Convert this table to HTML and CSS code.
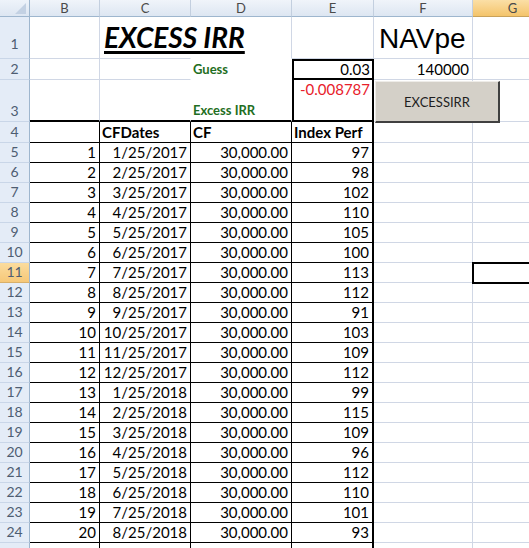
FILE: index.html
```html
<!DOCTYPE html>
<html>
<head>
<meta charset="utf-8">
<link rel="stylesheet" href="styles.css">
</head>
<body>
<div class="sheet">
  <div class="corner"></div><div class="ch">B</div><div class="ch">C</div><div class="ch">D</div><div class="ch">E</div><div class="ch">F</div><div class="ch ch-sel">G</div>

  <div class="rh rh-tall">1</div><div class="c"></div><div class="c c1"><span class="title">EXCESS IRR</span></div><div class="c d1"></div><div class="c"></div><div class="c"><span class="nav">NAVpe</span></div><div class="c"></div>

  <div class="rh">2</div><div class="c"></div><div class="c nogr"></div><div class="c fill"><span class="green">Guess</span></div><div class="c r box2">0.03</div><div class="c r">140000</div><div class="c"></div>

  <div class="rh">3</div><div class="c thick"></div><div class="c thick nogr"></div><div class="c fill thick"><span class="green">Excess IRR</span></div><div class="c r box3"><span class="red">-0.008787</span></div><div class="c"></div><div class="c"></div>

  <div class="rh">4</div><div class="c t"></div><div class="c t b">CFDates</div><div class="c t b">CF</div><div class="c t te b">Index Perf</div><div class="c"></div><div class="c"></div>

  <div class="rh">5</div><div class="c r t">1</div><div class="c r t">1/25/2017</div><div class="c r t">30,000.00</div><div class="c r t te">97</div><div class="c"></div><div class="c"></div>
  <div class="rh">6</div><div class="c r t">2</div><div class="c r t">2/25/2017</div><div class="c r t">30,000.00</div><div class="c r t te">98</div><div class="c"></div><div class="c"></div>
  <div class="rh">7</div><div class="c r t">3</div><div class="c r t">3/25/2017</div><div class="c r t">30,000.00</div><div class="c r t te">102</div><div class="c"></div><div class="c"></div>
  <div class="rh">8</div><div class="c r t">4</div><div class="c r t">4/25/2017</div><div class="c r t">30,000.00</div><div class="c r t te">110</div><div class="c"></div><div class="c"></div>
  <div class="rh">9</div><div class="c r t">5</div><div class="c r t">5/25/2017</div><div class="c r t">30,000.00</div><div class="c r t te">105</div><div class="c"></div><div class="c"></div>
  <div class="rh">10</div><div class="c r t">6</div><div class="c r t">6/25/2017</div><div class="c r t">30,000.00</div><div class="c r t te">100</div><div class="c"></div><div class="c"></div>
  <div class="rh rh-sel">11</div><div class="c r t">7</div><div class="c r t">7/25/2017</div><div class="c r t">30,000.00</div><div class="c r t te">113</div><div class="c"></div><div class="c active"></div>
  <div class="rh">12</div><div class="c r t">8</div><div class="c r t">8/25/2017</div><div class="c r t">30,000.00</div><div class="c r t te">112</div><div class="c"></div><div class="c"></div>
  <div class="rh">13</div><div class="c r t">9</div><div class="c r t">9/25/2017</div><div class="c r t">30,000.00</div><div class="c r t te">91</div><div class="c"></div><div class="c"></div>
  <div class="rh">14</div><div class="c r t">10</div><div class="c r t">10/25/2017</div><div class="c r t">30,000.00</div><div class="c r t te">103</div><div class="c"></div><div class="c"></div>
  <div class="rh">15</div><div class="c r t">11</div><div class="c r t">11/25/2017</div><div class="c r t">30,000.00</div><div class="c r t te">109</div><div class="c"></div><div class="c"></div>
  <div class="rh">16</div><div class="c r t">12</div><div class="c r t">12/25/2017</div><div class="c r t">30,000.00</div><div class="c r t te">112</div><div class="c"></div><div class="c"></div>
  <div class="rh">17</div><div class="c r t">13</div><div class="c r t">1/25/2018</div><div class="c r t">30,000.00</div><div class="c r t te">99</div><div class="c"></div><div class="c"></div>
  <div class="rh">18</div><div class="c r t">14</div><div class="c r t">2/25/2018</div><div class="c r t">30,000.00</div><div class="c r t te">115</div><div class="c"></div><div class="c"></div>
  <div class="rh">19</div><div class="c r t">15</div><div class="c r t">3/25/2018</div><div class="c r t">30,000.00</div><div class="c r t te">109</div><div class="c"></div><div class="c"></div>
  <div class="rh">20</div><div class="c r t">16</div><div class="c r t">4/25/2018</div><div class="c r t">30,000.00</div><div class="c r t te">96</div><div class="c"></div><div class="c"></div>
  <div class="rh">21</div><div class="c r t">17</div><div class="c r t">5/25/2018</div><div class="c r t">30,000.00</div><div class="c r t te">112</div><div class="c"></div><div class="c"></div>
  <div class="rh">22</div><div class="c r t">18</div><div class="c r t">6/25/2018</div><div class="c r t">30,000.00</div><div class="c r t te">110</div><div class="c"></div><div class="c"></div>
  <div class="rh">23</div><div class="c r t">19</div><div class="c r t">7/25/2018</div><div class="c r t">30,000.00</div><div class="c r t te">101</div><div class="c"></div><div class="c"></div>
  <div class="rh">24</div><div class="c r t">20</div><div class="c r t">8/25/2018</div><div class="c r t">30,000.00</div><div class="c r t te">93</div><div class="c"></div><div class="c"></div>
  <div class="rh rh-last"></div><div class="c t"></div><div class="c t last-row">9/25/2018</div><div class="c t"></div><div class="c t te"></div><div class="c"></div><div class="c"></div>
</div>
<button class="macro-btn" type="button">EXCESSIRR</button>
</body>
</html>
```

FILE: styles.css
```css
* { box-sizing: border-box; }
html, body { margin: 0; padding: 0; }
body {
  width: 529px;
  height: 548px;
  overflow: hidden;
  background: #fff;
  position: relative;
  font-family: Lato, "Liberation Sans", sans-serif;
}
.sheet {
  display: grid;
  grid-template-columns: 30px 70px 91px 101px 82px 99px 80px;
  grid-template-rows: 17px 42px 21px 42px 21px repeat(20, 20px) 6px;
  width: 553px;
}
.corner {
  background: linear-gradient(#eef3fa, #dde6f2);
  border-right: 1px solid #9eb6ce;
  border-bottom: 1px solid #9eb6ce;
  display: flex;
  justify-content: flex-end;
  align-items: flex-end;
  padding: 0 3px 2px 0;
}
.corner::after {
  content: "";
  width: 0;
  height: 0;
  border-left: 11px solid transparent;
  border-bottom: 11px solid #c3d1e3;
}
.ch {
  background: linear-gradient(#f0f4fa, #dde6f2);
  border-right: 1px solid #c3cfdf;
  border-bottom: 1px solid #9eb6ce;
  display: flex;
  justify-content: center;
  align-items: center;
  font-size: 13px;
  color: #4a4a4a;
  line-height: 16px;
}
.ch-sel {
  background: linear-gradient(#fbdfa6, #f4c46b);
  border-bottom-color: #c9a25a;
  border-right-color: #e0b870;
}
.rh {
  background: #e4ecf7;
  border-right: 1px solid #9eb6ce;
  border-bottom: 1px solid #c9d6e8;
  display: flex;
  justify-content: center;
  align-items: flex-end;
  font-size: 14px;
  line-height: 18px;
  padding-bottom: 1px;
  color: #4e5d72;
}
.rh-tall { padding-bottom: 5px; }
.rh-last { border-bottom: none; }
.rh-sel {
  background: linear-gradient(#fbdc9e, #f6c878);
  border-bottom-color: #d8b06a;
}
.c {
  border-right: 1px solid #d0d7e5;
  border-bottom: 1px solid #d0d7e5;
  display: flex;
  align-items: flex-end;
  padding: 0 3px 1px 3px;
  font-size: 15px;
  line-height: 18px;
  color: #000;
  white-space: nowrap;
  min-width: 0;
}
.r { justify-content: flex-end; }
.b { font-weight: 700; padding-left: 2px; }
.t {
  border-right-color: #000;
  border-bottom-color: #000;
}
.te { border-right: 2px solid #000; }
.thick { border-bottom: 2px solid #000; }
.nogr { border-right-color: transparent; }
.c1 {
  border-right-color: transparent;
  overflow: visible;
  padding: 0 0 5px 4px;
}
.d1 { border-bottom-color: transparent; }
.fill {
  background: #fff;
  border-right-color: transparent;
  padding-left: 2px;
}
.fill:not(.thick) { border-bottom-color: transparent; }
.last-row {
  justify-content: flex-end;
  align-items: flex-start;
  overflow: hidden;
  padding-top: 3px;
  line-height: 18px;
}
.title {
  font-size: 28px;
  font-weight: 700;
  font-style: italic;
  line-height: 32px;
  text-decoration: underline;
  text-decoration-thickness: 3px;
  text-underline-offset: 3px;
}
.nav {
  font-family: "Liberation Sans", Arial, sans-serif;
  font-size: 28px;
  line-height: 32px;
  padding: 0 0 2px 2px;
}
.green {
  color: #1f6e22;
  font-weight: 700;
  font-size: 13px;
  line-height: 18px;
}
.box2 {
  border: 2px solid #000;
  padding-right: 2px;
  padding-bottom: 0;
}
.box3 {
  border-left: 2px solid #000;
  border-right: 2px solid #000;
  border-bottom: 2px solid #000;
  align-items: flex-start;
  padding-right: 2px;
}
.red { color: #e8202a; }
.active { position: relative; }
.active::after {
  content: "";
  position: absolute;
  left: -1px;
  top: -1px;
  right: -4px;
  bottom: -2px;
  border: 2px solid #000;
}
.macro-btn {
  position: absolute;
  left: 375px;
  top: 81px;
  width: 125px;
  height: 42px;
  margin: 0;
  padding: 0;
  appearance: none;
  background: #d4d0c8;
  border-top: 1px solid #eeece8;
  border-left: 1px solid #eeece8;
  border-right: 2px solid #404040;
  border-bottom: 2px solid #404040;
  font-family: Lato, "Liberation Sans", sans-serif;
  font-size: 13px;
  color: #1e1e1e;
  text-align: center;
}
```
